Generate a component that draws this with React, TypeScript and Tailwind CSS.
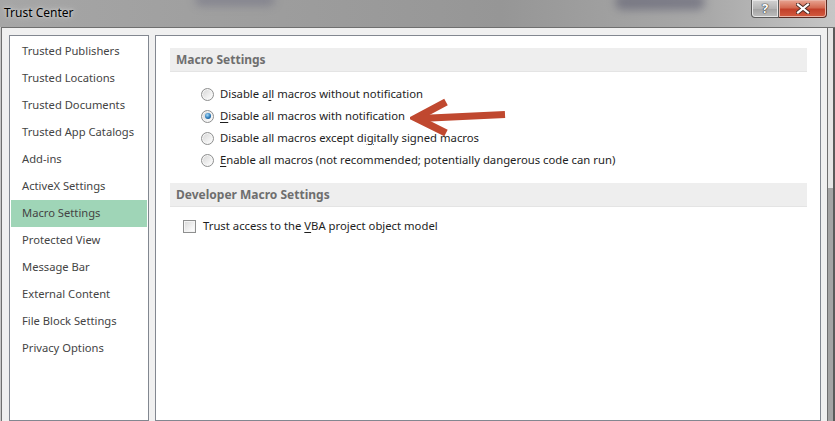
import React from "react";

const navItems = [
  "Trusted Publishers",
  "Trusted Locations",
  "Trusted Documents",
  "Trusted App Catalogs",
  "Add-ins",
  "ActiveX Settings",
  "Macro Settings",
  "Protected View",
  "Message Bar",
  "External Content",
  "File Block Settings",
  "Privacy Options",
];

// text split around the mnemonic letter: [before, key, after]
const macroOptions: { parts: [string, string, string]; checked?: boolean }[] = [
  { parts: ["Disable a", "l", "l macros without notification"] },
  { parts: ["", "D", "isable all macros with notification"], checked: true },
  { parts: ["Disable all macros except di", "g", "itally signed macros"] },
  { parts: ["", "E", "nable all macros (not recommended; potentially dangerous code can run)"] },
];

function Radio({ checked }: { checked?: boolean }) {
  return (
    <span className="flex h-[13px] w-[13px] shrink-0 items-center justify-center rounded-full border border-[#8e8f8f] bg-[linear-gradient(135deg,#d4d4d4,#f4f4f4_70%,#ffffff)] shadow-[inset_0_0_0_1px_#f6f6f6]">
      {checked && (
        <span className="h-[6px] w-[6px] rounded-full bg-[radial-gradient(circle_at_40%_35%,#a8dcfa,#2a78b8_55%,#123f6a)]" />
      )}
    </span>
  );
}

function Mnemonic({ parts }: { parts: [string, string, string] }) {
  return (
    <span>
      {parts[0]}
      <span className="underline decoration-1 underline-offset-2">{parts[1]}</span>
      {parts[2]}
    </span>
  );
}

function SectionHeader({ title }: { title: string }) {
  return (
    <div className="ml-[14px] mr-[13px] flex h-[24px] items-center border-b border-[#e4e4e4] bg-[#eeeeee] pl-[6px] text-[12px] font-bold text-[#6e6e6e]">
      {title}
    </div>
  );
}

function TitleBar() {
  return (
    <div className="relative flex h-[27px] shrink-0 items-start justify-between overflow-hidden bg-[linear-gradient(to_right,#a6a6a6,#9e9e9e_30%,#969696_60%,#a9a9a9_85%,#c6c6c6)]">
      <div className="absolute left-[195px] top-[-6px] h-[12px] w-[80px] rounded-full bg-[#6c6c80] opacity-50 blur-[4px]" />
      <div className="absolute left-[615px] top-[-6px] h-[16px] w-[90px] rounded-full bg-[#525268] opacity-50 blur-[4px]" />
      <span className="relative ml-[4px] mt-[5px] text-[12px] leading-[16px] text-black [text-shadow:0_0_6px_#d8d8d8,0_0_3px_#d8d8d8]">
        Trust Center
      </span>
      <div className="relative mr-[8px] flex h-[18px]">
        <div className="flex w-[28px] items-center justify-center rounded-bl-[4px] border border-t-0 border-[#5a5a5a] bg-[linear-gradient(to_bottom,#d2d2d2,#b4b4b4_50%,#a2a2a2_51%,#bdbdbd)] shadow-[inset_0_0_0_1px_#e6e6e6]">
          <span className="text-[13px] font-bold leading-none text-white [text-shadow:0_0_1px_#333,0_0_1px_#333,0_0_1px_#333]">
            ?
          </span>
        </div>
        <div className="flex w-[48px] items-center justify-center rounded-br-[4px] border border-l-0 border-t-0 border-[#5a2a22] bg-[linear-gradient(to_bottom,#e8a593,#d46a52_45%,#c2402a_55%,#d35c40)] shadow-[inset_0_0_0_1px_#eab3a5]">
          <svg width="14" height="11" viewBox="0 0 14 11">
            <path d="M2 1.5 L12 9.5 M12 1.5 L2 9.5" stroke="#4a2a24" strokeWidth="4" strokeLinecap="square" />
            <path d="M2 1.5 L12 9.5 M12 1.5 L2 9.5" stroke="#ffffff" strokeWidth="2.2" strokeLinecap="square" />
          </svg>
        </div>
      </div>
    </div>
  );
}

export default function App() {
  return (
    <div className="relative flex h-[421px] w-[835px] flex-col overflow-hidden bg-[#c8c8c8] font-['Noto_Sans',sans-serif]">
      <TitleBar />

      <div className="flex min-h-0 flex-1 pl-px">
        <div className="flex min-h-0 flex-1 border-l border-t border-[#6f6f6f] bg-[#f0f0f0]">
          <div className="w-[7px] shrink-0" />

          {/* left navigation */}
          <div className="mt-[7px] w-[140px] shrink-0 border border-[#828790] bg-white pt-[2px]">
            {navItems.map((item) => (
              <div
                key={item}
                className={
                  item === "Macro Settings"
                    ? "ml-px mr-px flex h-[27px] items-center bg-[#9fd5b7] pl-[11px] text-[11.2px] text-[#444444]"
                    : "ml-px mr-px flex h-[27px] items-center pl-[11px] text-[11.2px] text-[#444444]"
                }
              >
                {item}
              </div>
            ))}
          </div>

          <div className="w-[6px] shrink-0" />

          {/* settings panel */}
          <div className="relative mt-[7px] w-[666px] shrink-0 border border-[#828790] bg-white pt-[12px]">
            <SectionHeader title="Macro Settings" />
            <div className="mt-[11px] pl-[45px]">
              {macroOptions.map((opt) => (
                <div key={opt.parts.join("")} className="flex h-[22px] items-center gap-[6px] text-[11.3px] text-[#1e1e1e]">
                  <Radio checked={opt.checked} />
                  <Mnemonic parts={opt.parts} />
                </div>
              ))}
            </div>

            <div className="mt-[12px]">
              <SectionHeader title="Developer Macro Settings" />
            </div>
            <div className="mt-[8px] flex h-[22px] items-center gap-[7px] pl-[27px] text-[11.3px] text-[#1e1e1e]">
              <span className="h-[13px] w-[13px] shrink-0 border border-[#8e8f8f] bg-[linear-gradient(135deg,#d8d8d8,#f6f6f6_70%,#ffffff)] shadow-[inset_0_0_0_1px_#f4f4f4]" />
              <Mnemonic parts={["Trust access to the ", "V", "BA project object model"]} />
            </div>

            {/* red callout arrow */}
            <svg className="absolute left-[254px] top-[59px]" width="100" height="45" viewBox="410 94 100 45">
              <path d="M446 101 L416 117 L446 132" fill="none" stroke="#c0482f" strokeWidth="7.5" strokeLinejoin="miter" />
              <path d="M420 117.5 L505 113.5" fill="none" stroke="#c0482f" strokeWidth="7" />
            </svg>
          </div>

          <div className="w-[6px] shrink-0" />
          <div className="-mt-px w-px shrink-0 bg-[#6e6e6e]" />
          <div className="flex w-[5px] shrink-0 flex-col bg-[#e6e6e6]">
            <div className="h-[160px]" />
            <div className="flex-1 bg-[#a4a4a4]" />
          </div>
          <div className="w-[2px] shrink-0 bg-[#5a5a5a]" />
        </div>
      </div>
    </div>
  );
}
